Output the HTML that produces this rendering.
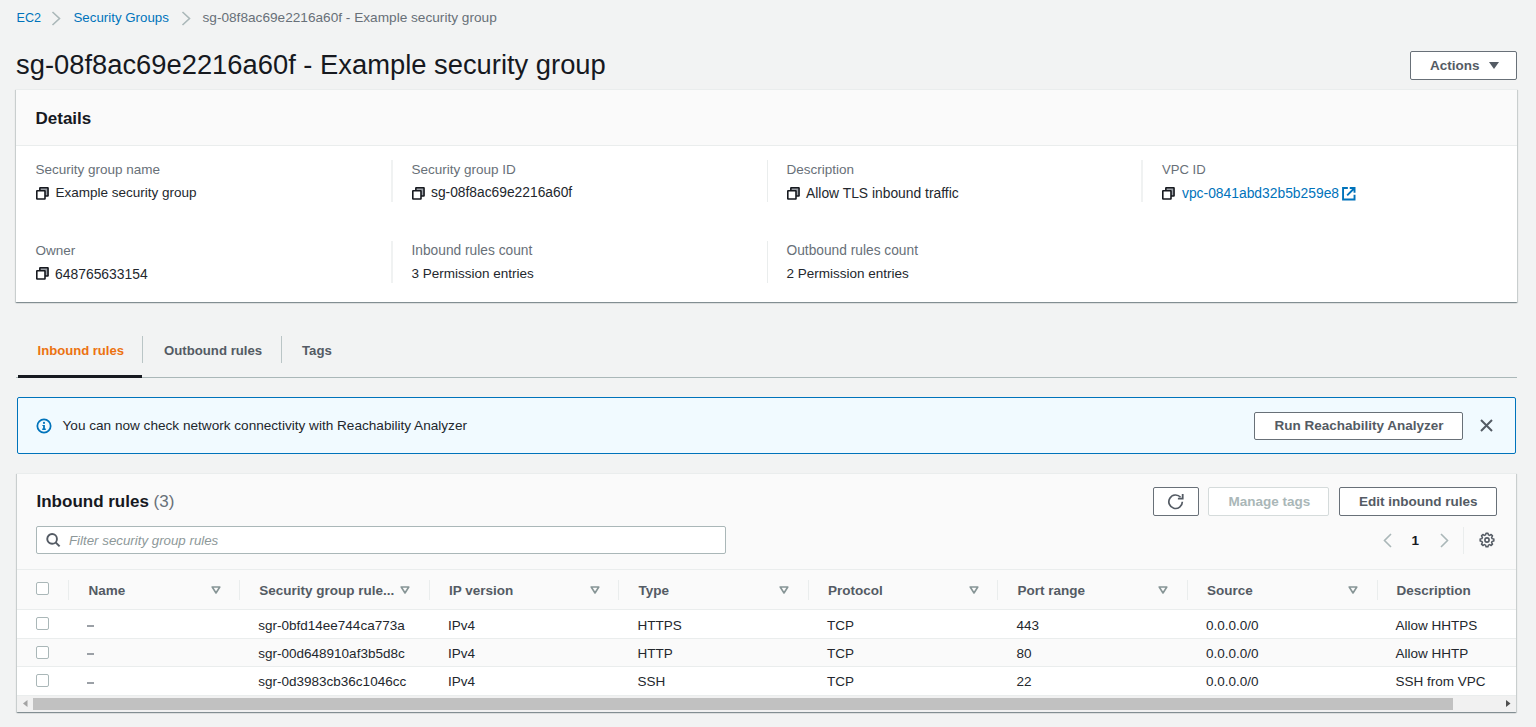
<!DOCTYPE html>
<html><head><meta charset="utf-8">
<style>
*{box-sizing:border-box;margin:0;padding:0}
html,body{width:1536px;height:727px;overflow:hidden;background:#f2f3f3;font-family:"Liberation Sans",sans-serif;color:#23272d;font-size:13.5px}
.a{position:absolute;white-space:nowrap;line-height:16px}
.lnk{color:#0073bb}
.gray{color:#687078}
.b{font-weight:bold;color:#16191f}
.card{position:absolute;background:#fff;border-top:1px solid #eaeded;box-shadow:0 1px 1px 0 rgba(0,28,36,.3),1px 1px 1px 0 rgba(0,28,36,.12),-1px 1px 1px 0 rgba(0,28,36,.12)}
.btn{position:absolute;border:1px solid #687078;border-radius:2px;background:#fff;color:#545b64;font-weight:bold;white-space:nowrap}
.ln{position:absolute;background:#eaeded}
.vd{position:absolute;width:1px;background:#eaeded}
svg{position:absolute;overflow:visible}
.hd{color:#545b64;font-weight:bold}
</style></head><body>

<!-- breadcrumb -->
<div class="a lnk" style="left:16.5px;top:10px;font-size:12.6px">EC2</div>
<svg style="left:51px;top:10.5px" width="10" height="15" viewBox="0 0 10 15"><path d="M1.5 1l7 6.5-7 6.5" fill="none" stroke="#aab7b8" stroke-width="1.6"/></svg>
<div class="a lnk" style="left:73.5px;top:10px;font-size:13.3px">Security Groups</div>
<svg style="left:181px;top:10.5px" width="10" height="15" viewBox="0 0 10 15"><path d="M1.5 1l7 6.5-7 6.5" fill="none" stroke="#aab7b8" stroke-width="1.6"/></svg>
<div class="a gray" style="left:202.5px;top:10px;font-size:13.65px">sg-08f8ac69e2216a60f - Example security group</div>

<!-- title -->
<div class="a" style="left:16px;top:49px;font-size:27.35px;line-height:32px;color:#16191f">sg-08f8ac69e2216a60f - Example security group</div>
<div class="btn" style="left:1410px;top:51px;width:107px;height:28.5px"><span class="a" style="left:19px;top:5.5px">Actions</span>
<svg style="left:78px;top:10px" width="10" height="7" viewBox="0 0 10 7"><path d="M0 0h10L5 7z" fill="#545b64"/></svg></div>

<!-- details card -->
<div class="card" style="left:16px;top:89px;width:1501px;height:213px">
  <div style="position:absolute;left:0;top:0;right:0;height:56px;background:#fafafa;border-bottom:1px solid #eaeded"></div>
</div>
<div class="a b" style="left:35.5px;top:108.5px;font-size:17px;line-height:20px">Details</div>

<div class="a gray" style="left:35.5px;top:162px">Security group name</div>
<div class="a" style="left:55.5px;top:185px">Example security group</div>
<div class="vd" style="left:391px;top:160px;height:42px;width:2px;background:#f0f2f2"></div>
<div class="a gray" style="left:411.5px;top:162px">Security group ID</div>
<div class="a" style="left:431px;top:185px;font-size:13.8px">sg-08f8ac69e2216a60f</div>
<div class="vd" style="left:767px;top:160px;height:42px"></div>
<div class="a gray" style="left:786.5px;top:162px">Description</div>
<div class="a" style="left:806px;top:185px;font-size:13.85px">Allow TLS inbound traffic</div>
<div class="vd" style="left:1141px;top:160px;height:42px;width:2px;background:#f0f2f2"></div>
<div class="a gray" style="left:1162px;top:162px;font-size:13.1px">VPC ID</div>
<div class="a lnk" style="left:1182px;top:185px;font-size:13.85px">vpc-0841abd32b5b259e8</div>

<div class="a gray" style="left:35.5px;top:242.5px">Owner</div>
<div class="a" style="left:55px;top:265.5px;font-size:13.9px">648765633154</div>
<div class="vd" style="left:391px;top:240.5px;height:42.5px;width:2px;background:#f0f2f2"></div>
<div class="a gray" style="left:411.5px;top:242.5px;font-size:13.75px">Inbound rules count</div>
<div class="a" style="left:411.5px;top:265.5px">3 Permission entries</div>
<div class="vd" style="left:767px;top:240.5px;height:42.5px"></div>
<div class="a gray" style="left:786.5px;top:242.5px;font-size:13.75px">Outbound rules count</div>
<div class="a" style="left:786.5px;top:265.5px">2 Permission entries</div>

<!-- copy icons -->
<svg style="left:36px;top:187px" width="13" height="13" viewBox="0 0 13 13"><rect x="3.85" y="0.8" width="8.2" height="8.2" rx="0.3" fill="#9ea2a8" stroke="#16191f" stroke-width="1.6"/><rect x="0.8" y="3.8" width="8.2" height="8.2" rx="0.3" fill="#fff" stroke="#16191f" stroke-width="1.6"/></svg>
<svg style="left:412px;top:187px" width="13" height="13" viewBox="0 0 13 13"><rect x="3.85" y="0.8" width="8.2" height="8.2" rx="0.3" fill="#9ea2a8" stroke="#16191f" stroke-width="1.6"/><rect x="0.8" y="3.8" width="8.2" height="8.2" rx="0.3" fill="#fff" stroke="#16191f" stroke-width="1.6"/></svg>
<svg style="left:787px;top:187px" width="13" height="13" viewBox="0 0 13 13"><rect x="3.85" y="0.8" width="8.2" height="8.2" rx="0.3" fill="#9ea2a8" stroke="#16191f" stroke-width="1.6"/><rect x="0.8" y="3.8" width="8.2" height="8.2" rx="0.3" fill="#fff" stroke="#16191f" stroke-width="1.6"/></svg>
<svg style="left:1162px;top:187px" width="13" height="13" viewBox="0 0 13 13"><rect x="3.85" y="0.8" width="8.2" height="8.2" rx="0.3" fill="#9ea2a8" stroke="#16191f" stroke-width="1.6"/><rect x="0.8" y="3.8" width="8.2" height="8.2" rx="0.3" fill="#fff" stroke="#16191f" stroke-width="1.6"/></svg>
<svg style="left:36px;top:267px" width="13" height="13" viewBox="0 0 13 13"><rect x="3.85" y="0.8" width="8.2" height="8.2" rx="0.3" fill="#9ea2a8" stroke="#16191f" stroke-width="1.6"/><rect x="0.8" y="3.8" width="8.2" height="8.2" rx="0.3" fill="#fff" stroke="#16191f" stroke-width="1.6"/></svg>
<!-- external link -->
<svg style="left:1342.2px;top:186.8px" width="13.6" height="13.4" viewBox="0 0 14 14"><path d="M6 1H1v12h12V8" fill="none" stroke="#0073bb" stroke-width="2"/><path d="M8 1h5v5M13 1L5.3 8.7" fill="none" stroke="#0073bb" stroke-width="2"/></svg>

<!-- tabs -->
<div class="a b" style="left:37.5px;top:343px;color:#ec7211;font-size:13.1px">Inbound rules</div>
<div class="vd" style="left:142px;top:336px;height:27px;background:#bac5c6"></div>
<div class="a b" style="left:164px;top:343px;color:#545b64;font-size:13.2px">Outbound rules</div>
<div class="vd" style="left:281px;top:336px;height:27px;background:#bac5c6"></div>
<div class="a b" style="left:302px;top:343px;color:#545b64;font-size:13.2px">Tags</div>
<div class="ln" style="left:16px;top:377px;width:1501px;height:1px;background:#aab7b8"></div>
<div class="ln" style="left:18px;top:375px;width:124px;height:2.5px;background:#16191f"></div>

<!-- alert -->
<div style="position:absolute;left:17px;top:397px;width:1499px;height:57px;background:#f1faff;border:1px solid #0073bb;border-radius:2px"></div>
<svg style="left:36.1px;top:418px" width="16" height="16" viewBox="0 0 16 16"><circle cx="8" cy="8" r="6.65" fill="none" stroke="#0073bb" stroke-width="1.75"/><circle cx="8" cy="4.9" r="1.05" fill="#0073bb"/><path d="M6.4 6.9H8.9V10.6H9.8V11.9H6.2V10.6H7.1V8.1H6.4z" fill="#0073bb"/></svg>
<div class="a" style="left:62.5px;top:418px;font-size:13.6px">You can now check network connectivity with Reachability Analyzer</div>
<div class="btn" style="left:1253.5px;top:411.5px;width:209px;height:28px;border-color:#687078"><span class="a" style="left:20px;top:5px">Run Reachability Analyzer</span></div>
<svg style="left:1480px;top:419px" width="13" height="13" viewBox="0 0 13 13"><path d="M1 1l11 11M12 1L1 12" stroke="#545b64" stroke-width="2"/></svg>


<!-- table card -->
<div class="card" style="left:17px;top:473px;width:1499px;height:239px;background:#fafafa;overflow:hidden"></div>
<div class="a b" style="left:36.5px;top:491.8px;font-size:17px;line-height:20px">Inbound rules <span style="font-weight:normal;color:#687078">(3)</span></div>
<div class="btn" style="left:1153px;top:487px;width:46px;height:28.5px"></div>
<svg style="left:1160px;top:487px" width="32" height="28" viewBox="0 0 32 28"><path d="M22.35 14.7A6.75 6.75 0 1 1 20.6 10.2" fill="none" stroke="#545b64" stroke-width="1.7"/><path d="M17.9 11.6H22.7V6.9" fill="none" stroke="#545b64" stroke-width="1.8"/></svg>
<div class="btn" style="left:1208px;top:487px;width:121px;height:28.5px;border-color:#d5dbdb;color:#aab7b8"><span class="a" style="left:19.5px;top:5.5px">Manage tags</span></div>
<div class="btn" style="left:1339px;top:487px;width:158px;height:28.5px"><span class="a" style="left:19px;top:5.5px">Edit inbound rules</span></div>
<div style="position:absolute;left:36px;top:526px;width:690px;height:28px;background:#fff;border:1px solid #aab7b8;border-radius:2px"></div>
<svg style="left:46px;top:533.3px" width="15" height="15" viewBox="0 0 15 15"><circle cx="6.1" cy="5.9" r="4.85" fill="none" stroke="#545b64" stroke-width="1.9"/><path d="M9.6 9.4L13.6 13.4" stroke="#545b64" stroke-width="2"/></svg>
<div class="a" style="left:69px;top:532.5px;font-style:italic;color:#8d9899;font-size:13.3px">Filter security group rules</div>
<svg style="left:1383px;top:533px" width="9" height="15" viewBox="0 0 9 15"><path d="M8 1L1.5 7.5 8 14" fill="none" stroke="#aab7b8" stroke-width="1.6"/></svg>
<div class="a b" style="left:1411.5px;top:532.5px">1</div>
<svg style="left:1439.5px;top:533px" width="9" height="15" viewBox="0 0 9 15"><path d="M1 1l6.5 6.5L1 14" fill="none" stroke="#aab7b8" stroke-width="1.6"/></svg>
<div class="vd" style="left:1463px;top:526.5px;height:27.5px"></div>
<svg style="left:1479px;top:532px" width="16" height="16" viewBox="0 0 16 16"><path d="M13.12 6.63 L14.83 7.04 L14.83 8.96 L13.12 9.37 L12.59 10.65 L13.51 12.15 L12.15 13.51 L10.65 12.59 L9.37 13.12 L8.96 14.83 L7.04 14.83 L6.63 13.12 L5.35 12.59 L3.85 13.51 L2.49 12.15 L3.41 10.65 L2.88 9.37 L1.17 8.96 L1.17 7.04 L2.88 6.63 L3.41 5.35 L2.49 3.85 L3.85 2.49 L5.35 3.41 L6.63 2.88 L7.04 1.17 L8.96 1.17 L9.37 2.88 L10.65 3.41 L12.15 2.49 L13.51 3.85 L12.59 5.35Z" fill="none" stroke="#545b64" stroke-width="1.5" stroke-linejoin="round"/><circle cx="8" cy="8" r="2.1" fill="none" stroke="#545b64" stroke-width="1.6"/></svg>
<div class="ln" style="left:17px;top:569px;width:1499px;height:1px"></div>
<div style="position:absolute;left:17px;top:610px;width:1499px;height:28.5px;background:#fff"></div>
<div style="position:absolute;left:17px;top:667px;width:1499px;height:28px;background:#fff"></div>
<div class="ln" style="left:17px;top:609px;width:1499px;height:1px"></div>
<div class="ln" style="left:17px;top:638px;width:1499px;height:1px"></div>
<div class="ln" style="left:17px;top:666px;width:1499px;height:1px"></div>
<!-- checkboxes -->

<div style="position:absolute;left:36px;top:582px;width:13px;height:13px;border:1px solid #aab7b8;border-radius:2px;background:#fff"></div>
<div style="position:absolute;left:36px;top:617px;width:13px;height:13px;border:1px solid #aab7b8;border-radius:2px;background:#fff"></div>
<div style="position:absolute;left:36px;top:645.5px;width:13px;height:13px;border:1px solid #aab7b8;border-radius:2px;background:#fff"></div>
<div style="position:absolute;left:36px;top:674px;width:13px;height:13px;border:1px solid #aab7b8;border-radius:2px;background:#fff"></div>
<div class="vd" style="left:68.2px;top:580px;height:20px"></div>
<div class="a hd" style="left:88.5px;top:582.5px">Name</div>
<svg style="left:210.5px;top:586px" width="10" height="8" viewBox="0 0 10 8"><path d="M1.2 1h7.6L5 7z" fill="none" stroke="#879596" stroke-width="1.6" stroke-linejoin="round"/></svg>
<div class="vd" style="left:239.2px;top:580px;height:20px"></div>
<div class="a hd" style="left:259.3px;top:582.5px">Security group rule...</div>
<svg style="left:400.2px;top:586px" width="10" height="8" viewBox="0 0 10 8"><path d="M1.2 1h7.6L5 7z" fill="none" stroke="#879596" stroke-width="1.6" stroke-linejoin="round"/></svg>
<div class="vd" style="left:428.9px;top:580px;height:20px"></div>
<div class="a hd" style="left:449.0px;top:582.5px">IP version</div>
<svg style="left:589.7px;top:586px" width="10" height="8" viewBox="0 0 10 8"><path d="M1.2 1h7.6L5 7z" fill="none" stroke="#879596" stroke-width="1.6" stroke-linejoin="round"/></svg>
<div class="vd" style="left:618.2px;top:580px;height:20px"></div>
<div class="a hd" style="left:638.5px;top:582.5px">Type</div>
<svg style="left:779.2px;top:586px" width="10" height="8" viewBox="0 0 10 8"><path d="M1.2 1h7.6L5 7z" fill="none" stroke="#879596" stroke-width="1.6" stroke-linejoin="round"/></svg>
<div class="vd" style="left:807.9px;top:580px;height:20px"></div>
<div class="a hd" style="left:828.0px;top:582.5px">Protocol</div>
<svg style="left:968.7px;top:586px" width="10" height="8" viewBox="0 0 10 8"><path d="M1.2 1h7.6L5 7z" fill="none" stroke="#879596" stroke-width="1.6" stroke-linejoin="round"/></svg>
<div class="vd" style="left:997.2px;top:580px;height:20px"></div>
<div class="a hd" style="left:1017.5px;top:582.5px">Port range</div>
<svg style="left:1158.2px;top:586px" width="10" height="8" viewBox="0 0 10 8"><path d="M1.2 1h7.6L5 7z" fill="none" stroke="#879596" stroke-width="1.6" stroke-linejoin="round"/></svg>
<div class="vd" style="left:1186.9px;top:580px;height:20px"></div>
<div class="a hd" style="left:1207.0px;top:582.5px">Source</div>
<svg style="left:1347.7px;top:586px" width="10" height="8" viewBox="0 0 10 8"><path d="M1.2 1h7.6L5 7z" fill="none" stroke="#879596" stroke-width="1.6" stroke-linejoin="round"/></svg>
<div class="vd" style="left:1376.9px;top:580px;height:20px"></div>
<div class="a hd" style="left:1396.5px;top:582.5px">Description</div>
<div style="position:absolute;left:87px;top:625px;width:7px;height:2px;background:#9ba0a6"></div>
<div class="a" style="left:258.3px;top:617.5px">sgr-0bfd14ee744ca773a</div>
<div class="a" style="left:448.0px;top:617.5px">IPv4</div>
<div class="a" style="left:637.5px;top:617.5px">HTTPS</div>
<div class="a" style="left:827.0px;top:617.5px">TCP</div>
<div class="a" style="left:1016.5px;top:617.5px">443</div>
<div class="a" style="left:1206.0px;top:617.5px">0.0.0.0/0</div>
<div class="a" style="left:1395.5px;top:617.5px">Allow HHTPS</div>
<div style="position:absolute;left:87px;top:653px;width:7px;height:2px;background:#9ba0a6"></div>
<div class="a" style="left:258.3px;top:645.9px">sgr-00d648910af3b5d8c</div>
<div class="a" style="left:448.0px;top:645.9px">IPv4</div>
<div class="a" style="left:637.5px;top:645.9px">HTTP</div>
<div class="a" style="left:827.0px;top:645.9px">TCP</div>
<div class="a" style="left:1016.5px;top:645.9px">80</div>
<div class="a" style="left:1206.0px;top:645.9px">0.0.0.0/0</div>
<div class="a" style="left:1395.5px;top:645.9px">Allow HHTP</div>
<div style="position:absolute;left:87px;top:682px;width:7px;height:2px;background:#9ba0a6"></div>
<div class="a" style="left:258.3px;top:674.3px">sgr-0d3983cb36c1046cc</div>
<div class="a" style="left:448.0px;top:674.3px">IPv4</div>
<div class="a" style="left:637.5px;top:674.3px">SSH</div>
<div class="a" style="left:827.0px;top:674.3px">TCP</div>
<div class="a" style="left:1016.5px;top:674.3px">22</div>
<div class="a" style="left:1206.0px;top:674.3px">0.0.0.0/0</div>
<div class="a" style="left:1395.5px;top:674.3px">SSH from VPC</div>

<!-- scrollbar -->
<div class="ln" style="left:17px;top:695px;width:1499px;height:1px"></div><div style="position:absolute;left:17px;top:696px;width:1499px;height:16px;background:#f1f1f1"></div>
<div style="position:absolute;left:33px;top:698px;width:1420px;height:12px;background:#c1c1c1"></div>
<svg style="left:22.5px;top:700px" width="5" height="7" viewBox="0 0 5 7"><path d="M4.5 0v7L0 3.5z" fill="#a3a3a3"/></svg>
<svg style="left:1506px;top:700px" width="5" height="7" viewBox="0 0 5 7"><path d="M0 0v7l4.5-3.5z" fill="#505050"/></svg>

</body></html>
